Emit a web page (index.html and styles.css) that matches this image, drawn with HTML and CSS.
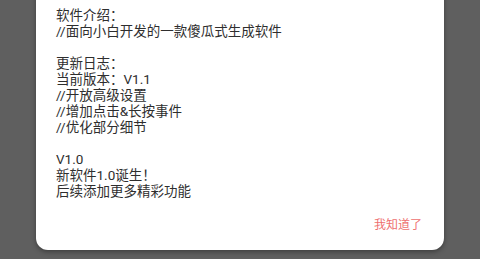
FILE: index.html
```html
<!DOCTYPE html>
<html lang="zh-CN">
<head>
<meta charset="utf-8">
<title>软件介绍</title>
<link rel="stylesheet" href="styles.css">
</head>
<body>
<div class="dialog">
  <div class="message">软件介绍：
//面向小白开发的一款傻瓜式生成软件

更新日志：
当前版本：V1.1
//开放高级设置
//增加点击&amp;长按事件
//优化部分细节

V1.0
新软件1.0诞生！
后续添加更多精彩功能</div>
  <div class="actions">
    <span class="btn">我知道了</span>
  </div>
</div>
</body>
</html>
```
FILE: styles.css
```css
html, body {
  margin: 0;
  padding: 0;
  background: #5f5f5f;
  height: 100%;
  overflow: hidden;
}
.dialog {
  width: 408px;
  margin: -20px auto 0;
  background: #ffffff;
  border-radius: 12px;
  box-shadow: 0 2px 5px rgba(0, 0, 0, 0.35);
}
.message {
  padding: 27px 20px 0 20px;
  white-space: pre-line;
  font-family: Roboto, "Noto Sans CJK SC", sans-serif;
  font-size: 13.5px;
  line-height: 16px;
  color: #2e2e2e;
}
.actions {
  display: flex;
  justify-content: flex-end;
  padding: 17px 22px 18px;
}
.btn {
  font-family: "Noto Sans CJK SC", sans-serif;
  font-size: 12px;
  line-height: 16px;
  color: #ee6f6f;
}
```
